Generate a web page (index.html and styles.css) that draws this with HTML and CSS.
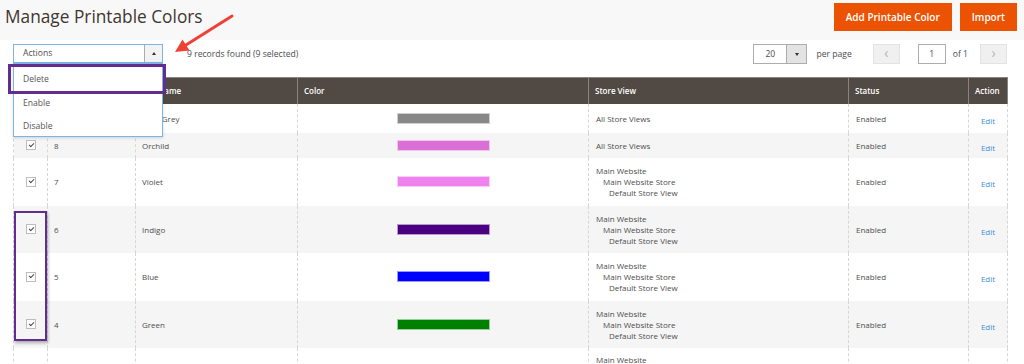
FILE: index.html
```html
<!DOCTYPE html>
<html>
<head>
<meta charset="utf-8">
<link rel="stylesheet" href="styles.css">
</head>
<body>
<div class="page">
  <header class="page-header">
    <h1 class="page-title">Manage Printable Colors</h1>
    <div class="page-actions">
      <button class="btn-primary">Add Printable Color</button>
      <button class="btn-primary">Import</button>
    </div>
  </header>

  <div class="toolbar">
    <div class="toolbar-left">
      <div class="action-select">
        <span class="action-label">Actions</span>
        <span class="select-toggle"><span class="tri-up"></span></span>
      </div>
      <span class="records">9 records found (9 selected)</span>
    </div>
    <div class="toolbar-right">
      <div class="perpage-select">
        <span class="perpage-value">20</span>
        <span class="perpage-toggle"><span class="tri-down"></span></span>
      </div>
      <span class="perpage-label">per page</span>
      <span class="pager-btn pager-prev">&#8249;</span>
      <span class="page-input">1</span>
      <span class="page-of">of 1</span>
      <span class="pager-btn pager-next">&#8250;</span>
    </div>
  </div>

  <table class="grid">
    <colgroup>
      <col class="c-check"><col class="c-id"><col class="c-name"><col class="c-color"><col class="c-store"><col class="c-status"><col class="c-action">
    </colgroup>
    <thead>
      <tr>
        <th></th><th>ID</th><th class="th-name">Name</th><th>Color</th><th>Store View</th><th>Status</th><th>Action</th>
      </tr>
    </thead>
    <tbody>
      <tr class="row-first">
        <td class="cell-check"><span class="cb"></span></td><td>9</td><td>Dark Grey</td>
        <td class="cell-color"><span class="swatch" style="background:#888888"></span></td>
        <td><div>All Store Views</div></td><td>Enabled</td><td class="cell-action"><a class="edit">Edit</a></td>
      </tr>
      <tr class="row-alt">
        <td class="cell-check"><span class="cb"></span></td><td>8</td><td>Orchild</td>
        <td class="cell-color"><span class="swatch" style="background:#da70d6"></span></td>
        <td><div>All Store Views</div></td><td>Enabled</td><td class="cell-action"><a class="edit">Edit</a></td>
      </tr>
      <tr>
        <td class="cell-check"><span class="cb"></span></td><td>7</td><td>Violet</td>
        <td class="cell-color"><span class="swatch" style="background:#ee82ee"></span></td>
        <td><div>Main Website</div><div class="ind1">Main Website Store</div><div class="ind2">Default Store View</div></td><td>Enabled</td><td class="cell-action"><a class="edit">Edit</a></td>
      </tr>
      <tr class="row-alt">
        <td class="cell-check"><span class="cb"></span></td><td>6</td><td>Indigo</td>
        <td class="cell-color"><span class="swatch" style="background:#4b0082"></span></td>
        <td><div>Main Website</div><div class="ind1">Main Website Store</div><div class="ind2">Default Store View</div></td><td>Enabled</td><td class="cell-action"><a class="edit">Edit</a></td>
      </tr>
      <tr>
        <td class="cell-check"><span class="cb"></span></td><td>5</td><td>Blue</td>
        <td class="cell-color"><span class="swatch" style="background:#0000ff"></span></td>
        <td><div>Main Website</div><div class="ind1">Main Website Store</div><div class="ind2">Default Store View</div></td><td>Enabled</td><td class="cell-action"><a class="edit">Edit</a></td>
      </tr>
      <tr class="row-alt">
        <td class="cell-check"><span class="cb"></span></td><td>4</td><td>Green</td>
        <td class="cell-color"><span class="swatch" style="background:#008000"></span></td>
        <td><div>Main Website</div><div class="ind1">Main Website Store</div><div class="ind2">Default Store View</div></td><td>Enabled</td><td class="cell-action"><a class="edit">Edit</a></td>
      </tr>
      <tr class="row-last">
        <td class="cell-check"></td><td></td><td></td>
        <td class="cell-color"></td>
        <td><div>Main Website</div></td><td></td><td class="cell-action"></td>
      </tr>
    </tbody>
  </table>

  <ul class="action-menu">
    <li>Delete</li>
    <li>Enable</li>
    <li>Disable</li>
  </ul>

  <div class="hl hl-delete"></div>
  <div class="hl hl-checks"></div>

  <svg class="arrow" width="260" height="70" viewBox="0 0 260 70">
    <line x1="232" y1="16" x2="186" y2="45" stroke="#ef4136" stroke-width="3" stroke-linecap="round"/>
    <polygon points="175,52 182.5,39.5 189.5,50.5" fill="#ef4136"/>
  </svg>
</div>
</body>
</html>
```

FILE: styles.css
```css
* { box-sizing: border-box; }
html, body { margin: 0; padding: 0; }
body {
  font-family: "Open Sans", "DejaVu Sans", sans-serif;
  color: #4d4d4d;
  background: #ffffff;
  width: 1024px;
  height: 364px;
  overflow: hidden;
}
.page { position: relative; }

.page-header {
  height: 40px;
  background: #f8f8f8;
  display: flex;
  justify-content: space-between;
  align-items: flex-start;
  padding: 3px 7px 0 5px;
}
.page-title {
  margin: 0;
  font-size: 17.3px;
  font-weight: 400;
  line-height: 28px;
  color: #41362f;
}
.page-actions { display: flex; gap: 8px; }
.btn-primary {
  height: 28px;
  padding: 0 11px;
  background: #eb5202;
  border: 1px solid #eb5202;
  color: #ffffff;
  font-family: "Open Sans", sans-serif;
  font-weight: 600;
  font-size: 10px;
  line-height: 26px;
}

.toolbar {
  margin-top: 4px;
  height: 20px;
  padding: 0 17px 0 13px;
  display: flex;
  justify-content: space-between;
  align-items: center;
  font-size: 8.6px;
  color: #4d4d4d;
}
.toolbar-left { display: flex; align-items: center; height: 20px; }
.action-select {
  width: 150px;
  height: 19px;
  border: 1px solid #7fb2e5;
  display: flex;
  align-self: flex-start;
  background: #fff;
}
.action-label { flex: 1; padding-left: 9px; line-height: 17px; }
.select-toggle {
  width: 18px;
  border-left: 1px solid #adadad;
  background: #f2f2f2;
  display: flex;
  align-items: center;
  justify-content: center;
}
.tri-up {
  width: 0; height: 0;
  border-left: 2.5px solid transparent;
  border-right: 2.5px solid transparent;
  border-bottom: 3px solid #303030;
}
.records { margin-left: 24px; }

.toolbar-right { display: flex; align-items: center; height: 20px; }
.perpage-select {
  width: 54px;
  height: 20px;
  border: 1px solid #adadad;
  display: flex;
  background: #fff;
}
.perpage-value { flex: 1; padding-left: 11px; line-height: 18px; }
.perpage-toggle {
  width: 20px;
  background: #e3e3e3;
  border-left: 1px solid #adadad;
  display: flex;
  align-items: center;
  justify-content: center;
}
.tri-down {
  width: 0; height: 0;
  border-left: 2.5px solid transparent;
  border-right: 2.5px solid transparent;
  border-top: 3px solid #303030;
}
.perpage-label { margin-left: 9px; }
.pager-btn {
  width: 27px;
  height: 20px;
  background: #f0f0f0;
  border: 1px solid #e3e3e3;
  color: #b5b5b5;
  font-size: 14px;
  line-height: 16px;
  text-align: center;
}
.pager-prev { margin-left: 21px; }
.page-input {
  margin-left: 18px;
  width: 28px;
  height: 20px;
  border: 1px solid #adadad;
  text-align: center;
  line-height: 18px;
  background: #fff;
}
.page-of { margin-left: 7px; }
.pager-next { margin-left: 12px; }

.grid {
  margin: 13px 0 0 13px;
  width: 994px;
  border-collapse: collapse;
  table-layout: fixed;
  font-size: 8px;
  line-height: 11px;
}
.c-check { width: 34px; }
.c-id { width: 88px; }
.c-name { width: 162px; }
.c-color { width: 291px; }
.c-store { width: 260px; }
.c-status { width: 120px; }
.c-action { width: 39px; }

.grid th {
  background: #514943;
  color: #ffffff;
  font-weight: 600;
  text-align: left;
  height: 26px;
  padding: 0 6px;
  border: 1px solid #8a837f;
  border-bottom: 0;
}
.grid th.th-name { padding-left: 22px; }
.grid td {
  padding: 7px 6px 7.5px 6px;
  vertical-align: middle;
  border-left: 1px dashed #d6d6d6;
  border-right: 1px dashed #d6d6d6;
  color: #4d4d4d;
}
.grid tr.row-first td { padding-top: 9px; padding-bottom: 9px; }
.grid tr.row-alt td { background: #f5f5f5; }
.grid tr.row-last td { vertical-align: top; padding-top: 6px; height: 40px; }
.grid td:nth-child(5), .grid td:nth-child(6) { padding-left: 7px; }
.ind1 { padding-left: 7px; }
.ind2 { padding-left: 13px; }

.cell-check { text-align: center; }
.cb {
  display: block;
  margin: 0 auto;
  width: 10px;
  height: 10px;
  border: 1px solid #bdbdbd;
  background: #fff;
  position: relative;
}
.cb::after {
  content: "";
  position: absolute;
  left: 2px;
  top: 1.5px;
  width: 4px;
  height: 2px;
  border-left: 1px solid #514943;
  border-bottom: 1px solid #514943;
  transform: rotate(-45deg);
}
.cell-color { text-align: center; }
.swatch {
  display: block;
  margin: 0 auto;
  width: 93px;
  height: 11px;
  border: 1px solid rgba(255,255,255,0.6);
}
.cell-action { text-align: center; padding-left: 0 !important; padding-right: 0 !important; }
.edit { color: #3d8ddb; position: relative; top: 2px; }

.action-menu {
  position: absolute;
  top: 63px;
  left: 13px;
  width: 150px;
  height: 74px;
  margin: 0;
  padding: 4px 0 0 0;
  list-style: none;
  background: #fff;
  border: 1px solid #7fb2e5;
  box-shadow: 0 1px 3px rgba(0,0,0,0.15);
  font-size: 8.6px;
  color: #555;
}
.action-menu li { height: 23.5px; line-height: 23.5px; padding-left: 9px; }

.hl {
  position: absolute;
  border: 3px solid #632c8f;
  pointer-events: none;
}
.hl-delete { left: 8px; top: 64px; width: 158px; height: 30px; }
.hl-checks {
  left: 14px; top: 211px; width: 33px; height: 130px;
  border-width: 2.5px;
  box-shadow: 1px 2px 3px rgba(0,0,0,0.3);
}
.arrow { position: absolute; left: 0; top: 0; pointer-events: none; }
```
